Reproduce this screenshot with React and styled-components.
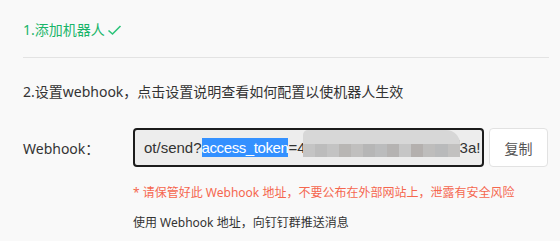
import React from "react";
import styled, { createGlobalStyle } from "styled-components";

const Global = createGlobalStyle`
  html, body { margin: 0; padding: 0; background: #f9f9f9; }
  body { font-family: "Noto Sans", "Noto Sans CJK SC", sans-serif; color: #333; }
`;

const Page = styled.div`
  width: 560px;
  height: 241px;
  box-sizing: border-box;
  padding: 20px 11px 0 23px;
  background: #f9f9f9;
  overflow: hidden;
`;

const StepDone = styled.div`
  display: flex;
  align-items: center;
  gap: 2px;
  height: 20px;
  font-size: 14px;
  line-height: 20px;
  color: #1bb56a;
`;

const Divider = styled.div`
  height: 1px;
  background: #e3e3e3;
  margin-top: 17px;
`;

const StepText = styled.div`
  margin-top: 24px;
  font-size: 14px;
  line-height: 20px;
  color: #333;
`;

const Row = styled.div`
  display: flex;
  align-items: center;
  margin-top: 26px;
  height: 39px;
`;

const Label = styled.div`
  width: 110px;
  font-size: 14px;
  color: #333;
`;

const Field = styled.div`
  width: 351px;
  height: 39px;
  box-sizing: border-box;
  border: 2px solid #1c1c1c;
  border-radius: 4px;
  background: #ededed;
  padding: 0 0 0 9px;
  display: flex;
  align-items: center;
  white-space: nowrap;
  overflow: hidden;
  font-family: "Liberation Sans", "Noto Sans CJK SC", sans-serif;
  font-size: 15px;
  color: #333;
`;

const Chunk = styled.span`
  flex: none;
`;

const Sel = styled.span`
  flex: none;
  background: #3390ff;
  color: #fff;
  line-height: 19px;
  letter-spacing: -0.4px;
`;

const Mosaic = styled.span`
  position: relative;
  flex: none;
  align-self: flex-start;
  margin-left: -3px;
  width: 157px;
  height: 28px;
  display: flex;
  align-items: flex-end;
`;

const Cloud = styled.span`
  position: absolute;
  left: 0;
  top: 0;
  width: 157px;
  height: 14px;
  background: #d7d7d7;
  border-radius: 14px 40px 0 0;
`;

const Tile = styled.span`
  display: block;
  flex: 1;
  height: 17px;
  margin-bottom: 1px;
  background: ${(p) => p.$c};
`;

const CopyButton = styled.button`
  margin-left: 5px;
  width: 59px;
  height: 39px;
  box-sizing: border-box;
  border: 1px solid #e2e2e2;
  border-radius: 4px;
  background: #fff;
  font-family: inherit;
  font-size: 14px;
  color: #555;
  padding: 0;
`;

const Warn = styled.div`
  margin-top: 17px;
  margin-left: 110px;
  font-size: 12px;
  line-height: 18px;
  color: #f5674f;
`;

const Note = styled.div`
  margin-top: 12px;
  margin-left: 110px;
  font-size: 12px;
  line-height: 18px;
  color: #333;
`;

const tiles = ["#c4c4c4", "#bcbcbc", "#c3c3c3", "#b8b6b4", "#c0bfbe", "#b6b6b6", "#bbbcbd", "#b5b3b2", "#c6c6c6", "#b4b0ae", "#bebdbc", "#b9babb", "#c2c1c0"];

export default function App() {
  return (
    <Page>
      <Global />
      <StepDone>
        1.添加机器人
        <svg width="15" height="12" viewBox="0 0 15 12">
          <polyline points="1.5,6.5 5.5,10 13.5,2" fill="none" stroke="#2cc47a" strokeWidth="1.6" />
        </svg>
      </StepDone>
      <Divider />
      <StepText>2.设置webhook，点击设置说明查看如何配置以使机器人生效</StepText>
      <Row>
        <Label>Webhook：</Label>
        <Field>
          <Chunk>ot/send?</Chunk>
          <Sel>access_token</Sel>
          <Chunk>=4</Chunk>
          <Mosaic>
            <Cloud />
            {tiles.map((c, i) => (
              <Tile key={i} $c={c} />
            ))}
          </Mosaic>
          <Chunk>3a!</Chunk>
        </Field>
        <CopyButton>复制</CopyButton>
      </Row>
      <Warn>* 请保管好此 Webhook 地址，不要公布在外部网站上，泄露有安全风险</Warn>
      <Note>使用 Webhook 地址，向钉钉群推送消息</Note>
    </Page>
  );
}
